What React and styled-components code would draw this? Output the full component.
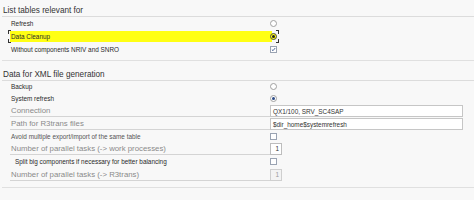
import React from 'react'
import styled, { createGlobalStyle } from "styled-components";

const GlobalStyle = createGlobalStyle`
  body {
    margin: 0;
    background: #f8f8f8;
    font-family: "Liberation Sans", Arial, sans-serif;
  }
`;

const App = () => {
    return (
        <Page>
            <GlobalStyle />
            <Section>
                <Title $h={17}>List tables relevant for</Title>
                <Body $pad={4}>
                    <Row $h={13}>
                        <Label>Refresh</Label>
                        <Control><Radio /></Control>
                    </Row>
                    <Row $h={13} $highlight>
                        <Label>Data Cleanup</Label>
                        <Control><Radio $checked $highlight /></Control>
                        <Focus>
                            <Corner $top $left />
                            <Corner $left />
                            <Corner $top />
                            <Corner />
                        </Focus>
                    </Row>
                    <Row $h={13}>
                        <Label>Without components NRIV and SNRO</Label>
                        <Control><Check $checked /></Control>
                    </Row>
                </Body>
            </Section>
            <Section>
                <Title $h={20}>Data for XML file generation</Title>
                <Body $pad={6}>
                    <Row $h={11}>
                        <Label>Backup</Label>
                        <Control><Radio /></Control>
                    </Row>
                    <Row $h={12}>
                        <Label>System refresh</Label>
                        <Control><Radio $checked /></Control>
                    </Row>
                    <Row $h={13}>
                        <Label $field>Connection</Label>
                        <Control $end><TextBox>QX1/100, SRV_SC4SAP</TextBox></Control>
                    </Row>
                    <Row $h={13}>
                        <Label $field>Path for R3trans files</Label>
                        <Control $end><TextBox>$dir_home$systemrefresh</TextBox></Control>
                    </Row>
                    <Row $h={12}>
                        <Label $muted>Avoid multiple export/import of the same table</Label>
                        <Control><Check /></Control>
                    </Row>
                    <Row $h={13}>
                        <Label $field>Number of parallel tasks (-&gt; work processes)</Label>
                        <Control><NumBox>1</NumBox></Control>
                    </Row>
                    <Row $h={13}>
                        <Label $indent>Split big components if necessary for better balancing</Label>
                        <Control><Check /></Control>
                    </Row>
                    <Row $h={13}>
                        <Label $field>Number of parallel tasks (-&gt; R3trans)</Label>
                        <Control><NumBox $disabled>1</NumBox></Control>
                    </Row>
                </Body>
            </Section>
        </Page>
    )
}

const Radio = ({ $checked, $highlight }) => (
    <RadioCircle $checked={$checked} $highlight={$highlight}>
        {$checked && <Dot $highlight={$highlight} />}
    </RadioCircle>
)

const Check = ({ $checked }) => (
    <CheckBox>
        {$checked && (
            <svg width="7" height="7" viewBox="0 0 7 7">
                <path d="M1.2 3.6 L2.8 5.2 L5.9 1.4" fill="none" stroke="#24437f" strokeWidth="1.1" />
            </svg>
        )}
    </CheckBox>
)

const Page = styled.div`
padding-left: 2px;
width: 472px;
`;

const Section = styled.div``;

const Title = styled.div`
height: ${p => p.$h}px;
box-sizing: border-box;
display: flex;
align-items: flex-end;
padding: 0 0 1px 1px;
font-size: 8.2px;
color: #333;
border-bottom: 1px solid #dcdcdc;
`;

const Body = styled.div`
padding: 0 0 ${p => p.$pad}px 8px;
border-bottom: 1px solid #e0e0e0;
`;

const Row = styled.div`
position: relative;
display: grid;
grid-template-columns: 260px 1fr;
height: ${p => p.$h}px;
box-sizing: border-box;
${p => p.$highlight && `
  margin-left: -1px;
  padding: 1px 0 1px 1px;
  background: linear-gradient(90deg, #ffff14 263px, transparent 263px);
  background-clip: content-box;
`}
`;

const Label = styled.div`
display: flex;
align-items: center;
box-sizing: border-box;
padding-left: ${p => p.$indent ? 5 : 1}px;
font-size: ${p => p.$field ? 7.8 : 6.4}px;
color: ${p => p.$field ? "#8a8a8a" : p.$muted ? "#555" : "#2a2a2a"};
white-space: nowrap;
${p => p.$field && `border-bottom: 1px solid #d4d4d4;`}
`;

const Control = styled.div`
display: flex;
align-items: ${p => p.$end ? "flex-end" : "center"};
`;

const RadioCircle = styled.span`
width: 7px;
height: 7px;
box-sizing: border-box;
border-radius: 50%;
border: 1px solid ${p => p.$highlight ? "#4a4a4a" : "#a0a0a0"};
background: ${p => p.$highlight ? "#ffff14" : "#fff"};
display: flex;
align-items: center;
justify-content: center;
`;

const Dot = styled.span`
width: 3px;
height: 3px;
border-radius: 50%;
background: ${p => p.$highlight ? "#1e1e1e" : "#2b4a86"};
`;

const CheckBox = styled.span`
width: 7px;
height: 7px;
box-sizing: border-box;
border: 1px solid #9aa3b2;
background: #fff;
display: flex;
align-items: center;
justify-content: center;

svg {
    display: block;
}
`;

const TextBox = styled.div`
width: 193px;
height: 12px;
box-sizing: border-box;
border: 1px solid #c6c6c6;
background: #fff;
font-size: 6.4px;
color: #333;
padding-left: 2px;
display: flex;
align-items: center;
white-space: nowrap;
`;

const NumBox = styled.div`
width: 12px;
height: 12px;
box-sizing: border-box;
border: 1px solid ${p => p.$disabled ? "#cfcfcf" : "#bdbdbd"};
background: ${p => p.$disabled ? "#f3f3f3" : "#fff"};
color: ${p => p.$disabled ? "#9a9a9a" : "#333"};
font-size: 6.4px;
display: flex;
align-items: center;
justify-content: flex-end;
padding-right: 2px;
`;

const Focus = styled.div`
position: absolute;
left: -1px;
top: 0;
width: 271px;
height: 13px;
pointer-events: none;
`;

const Corner = styled.span`
position: absolute;
width: 2px;
height: 3px;
${p => p.$top ? "top: 0;" : "bottom: 0;"}
${p => p.$left ? "left: 0;" : "right: 0;"}
border-${p => p.$top ? "top" : "bottom"}: 1px solid #333;
border-${p => p.$left ? "left" : "right"}: 1px solid #333;
`;

export default App;
